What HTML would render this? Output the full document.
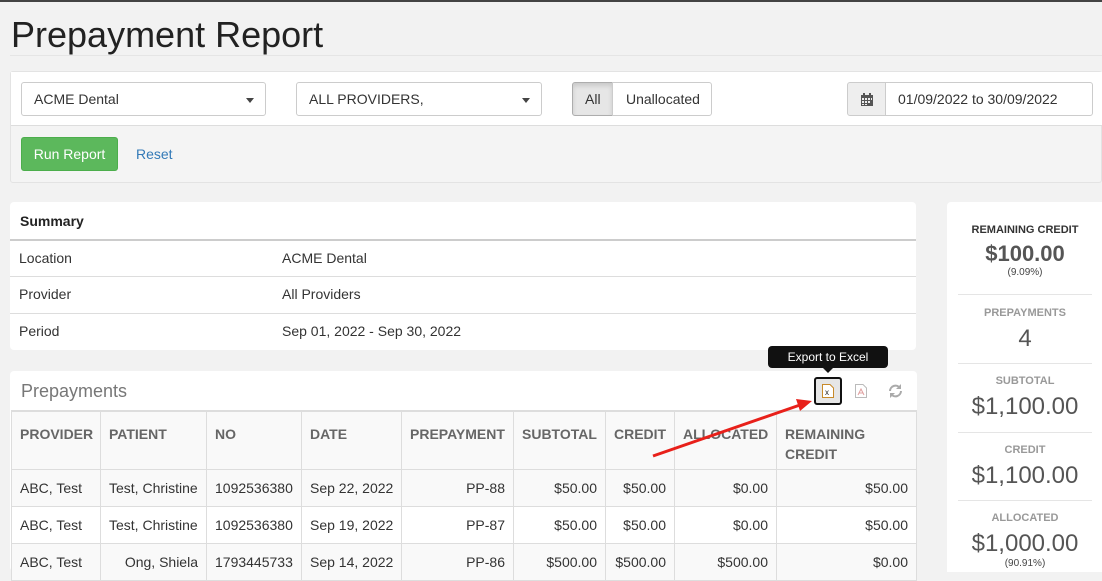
<!DOCTYPE html>
<html><head><style>
*{box-sizing:border-box;margin:0;padding:0}
body{width:1102px;height:565px;overflow:hidden;background:#f2f2f2;font-family:"Liberation Sans",Arial,sans-serif;font-size:14px;color:#333;position:relative;white-space:nowrap}
.a{position:absolute}
.sel{position:absolute;top:82px;height:34px;background:#fff;border:1px solid #ccc;border-radius:3px;padding:8px 12px;font-size:14px}
.sel:after{content:"";position:absolute;right:11px;top:15px;border-left:4px solid transparent;border-right:4px solid transparent;border-top:5px solid #444}
.row{position:absolute;left:0;width:906px;height:37px;border-top:1px solid #ddd;padding:9px 9px}
table{border-collapse:collapse;position:absolute;left:11px;top:410px;width:905px;font-size:14px;table-layout:fixed}
td,th{border:1px solid #ddd;padding:0 8px;vertical-align:top;overflow:hidden;white-space:nowrap}
th{height:58px;text-align:left;color:#666;font-weight:bold;padding-top:12px;line-height:20px;background:#f9f9f9;border-top:2px solid #ddd;white-space:normal}
td{height:37px;padding-top:10px}
td.r{text-align:right}
.st{position:absolute;left:958px;width:134px;text-align:center;border-bottom:1px solid #e5e5e5}
.st .l{font-size:11px;font-weight:bold;color:#999}
.st .v{font-size:24px;color:#555;margin-top:6px;line-height:28px}
</style></head><body>
<div class="a" style="left:0;top:0;width:1102px;height:2px;background:#444"></div>
<div class="a" style="left:11px;top:14px;font-size:36px;color:#222">Prepayment Report</div>
<div class="a" style="left:10px;top:55px;width:1092px;height:1px;background:#e5e5e5"></div>
<div class="a" style="left:10px;top:71px;width:1092px;height:112px;background:#f4f4f4;border:1px solid #e3e3e3;border-radius:3px"></div>
<div class="a" style="left:11px;top:72px;width:1091px;height:54px;background:#fff;border-bottom:1px solid #ddd"></div>
<div class="sel" style="left:21px;width:245px">ACME Dental</div>
<div class="sel" style="left:296px;width:246px">ALL PROVIDERS,</div>
<div class="a" style="left:572px;top:82px;width:41px;height:34px;background:#e6e6e6;border:1px solid #adadad;border-radius:3px 0 0 3px;box-shadow:inset 0 3px 5px rgba(0,0,0,.125);padding:8px 12px">All</div>
<div class="a" style="left:612px;top:82px;width:100px;height:34px;background:#fff;border:1px solid #ccc;border-radius:0 3px 3px 0;padding:8px 13px">Unallocated</div>
<div class="a" style="left:847px;top:82px;width:39px;height:34px;background:#eee;border:1px solid #ccc;border-radius:3px 0 0 3px">
<svg class="a" style="left:13px;top:10px" width="12" height="13" viewBox="0 0 12 13"><rect x="0" y="2" width="12" height="11" fill="#555"/><rect x="2" y="0" width="2" height="3" fill="#555"/><rect x="8" y="0" width="2" height="3" fill="#555"/><g fill="#eee"><rect x="1" y="5" width="2" height="2"/><rect x="4" y="5" width="2" height="2"/><rect x="7" y="5" width="2" height="2"/><rect x="10" y="5" width="1" height="2"/><rect x="1" y="8" width="2" height="2"/><rect x="4" y="8" width="2" height="2"/><rect x="7" y="8" width="2" height="2"/><rect x="1" y="11" width="2" height="1"/><rect x="4" y="11" width="2" height="1"/></g></svg></div>
<div class="a" style="left:885px;top:82px;width:208px;height:34px;background:#fff;border:1px solid #ccc;border-radius:0 3px 3px 0;padding:8px 12px">01/09/2022 to 30/09/2022</div>
<div class="a" style="left:21px;top:137px;width:97px;height:34px;background:#5cb85c;border:1px solid #4cae4c;border-radius:3px;color:#fff;padding:8px 0;text-align:center">Run Report</div>
<div class="a" style="left:136px;top:146px;color:#337ab7">Reset</div>

<div class="a" style="left:10px;top:202px;width:906px;height:148px;background:#fff;border-radius:4px;overflow:hidden">
<div class="a" style="left:10px;top:11px;font-weight:bold;font-size:14px;color:#222">Summary</div>
<div class="row" style="top:37px;border-top:2px solid #ccc">Location<span class="a" style="left:272px">ACME Dental</span></div>
<div class="row" style="top:74px">Provider<span class="a" style="left:272px">All Providers</span></div>
<div class="row" style="top:111px">Period<span class="a" style="left:272px">Sep 01, 2022 - Sep 30, 2022</span></div>
</div>

<div class="a" style="left:10px;top:371px;width:907px;height:200px;background:#fff;border-radius:4px"></div>
<div class="a" style="left:21px;top:381px;font-size:18px;color:#777">Prepayments</div>
<div class="a" style="left:768px;top:346px;width:120px;height:22px;background:#111;border-radius:4px;color:#fff;font-size:12px;text-align:center;line-height:22px">Export to Excel</div>
<div class="a" style="left:823px;top:368px;border-left:5px solid transparent;border-right:5px solid transparent;border-top:5px solid #111"></div>
<div class="a" style="left:814px;top:377px;width:28px;height:28px;background:#e6e6e6;border:2px solid #111;border-radius:3px">
<svg class="a" style="left:6px;top:5px" width="12" height="14" viewBox="0 0 12 14"><path d="M.5.5h7.5l3.5 3.5v9.5h-11z" fill="#fff" stroke="#c88a2a"/><text x="3" y="11" font-size="8" font-family="Liberation Sans" fill="#222">x</text></svg></div>
<svg class="a" style="left:855px;top:384px" width="12" height="14" viewBox="0 0 12 14"><path d="M.5.5h7.5l3.5 3.5v9.5h-11z" fill="#fff" stroke="#bbb"/><path d="M3 11l3-6 3 6M4 9h4" stroke="#e0a0a0" fill="none"/></svg>
<svg class="a" style="left:888px;top:384px" width="15" height="14" viewBox="0 0 15 14"><path d="M2 7a5.5 5.5 0 0 1 10-3M13 7a5.5 5.5 0 0 1-10 3" stroke="#aaa" stroke-width="2" fill="none"/><path d="M13 0v5h-5z M2 14v-5h5z" fill="#aaa"/></svg>

<table>
<colgroup><col style="width:89px"><col style="width:106px"><col style="width:95px"><col style="width:100px"><col style="width:112px"><col style="width:92px"><col style="width:69px"><col style="width:102px"><col style="width:140px"></colgroup>
<tr><th>PROVIDER</th><th>PATIENT</th><th>NO</th><th>DATE</th><th>PREPAYMENT</th><th>SUBTOTAL</th><th>CREDIT</th><th>ALLOCATED</th><th>REMAINING<br>CREDIT</th></tr>
<tr style="background:#f9f9f9"><td>ABC, Test</td><td>Test, Christine</td><td>1092536380</td><td>Sep 22, 2022</td><td class="r">PP-88</td><td class="r">$50.00</td><td class="r">$50.00</td><td class="r">$0.00</td><td class="r">$50.00</td></tr>
<tr style="background:#fff"><td>ABC, Test</td><td>Test, Christine</td><td>1092536380</td><td>Sep 19, 2022</td><td class="r">PP-87</td><td class="r">$50.00</td><td class="r">$50.00</td><td class="r">$0.00</td><td class="r">$50.00</td></tr>
<tr style="background:#f9f9f9"><td>ABC, Test</td><td class="r">Ong, Shiela</td><td>1793445733</td><td>Sep 14, 2022</td><td class="r">PP-86</td><td class="r">$500.00</td><td class="r">$500.00</td><td class="r">$500.00</td><td class="r">$0.00</td></tr>
</table>
<svg class="a" style="left:0;top:0" width="1102" height="565"><line x1="653" y1="456" x2="800" y2="405" stroke="#e8201a" stroke-width="3"/><path d="M812 401l-16-2 4 12z" fill="#e8201a"/></svg>

<div class="a" style="left:947px;top:202px;width:155px;height:370px;background:#fff;border-radius:4px 0 0 0"></div>
<div class="st" style="top:224px;height:71px"><div class="l" style="color:#333">REMAINING CREDIT</div><div style="font-size:22px;font-weight:bold;color:#555;margin-top:6px;line-height:24px">$100.00</div><div style="font-size:10px;color:#444;margin-top:1px">(9.09%)</div></div>
<div class="st" style="top:307px;height:57px"><div class="l">PREPAYMENTS</div><div class="v">4</div></div>
<div class="st" style="top:375px;height:58px"><div class="l">SUBTOTAL</div><div class="v">$1,100.00</div></div>
<div class="st" style="top:444px;height:57px"><div class="l">CREDIT</div><div class="v">$1,100.00</div></div>
<div class="st" style="top:512px;height:60px;border:0"><div class="l">ALLOCATED</div><div class="v">$1,000.00</div><div style="font-size:10px;color:#444">(90.91%)</div></div>
</body></html>
